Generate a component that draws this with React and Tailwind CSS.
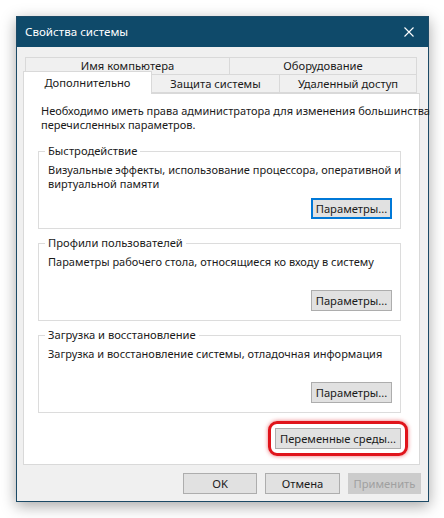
import React from 'react';

const font = { fontFamily: '"Noto Sans", "Segoe UI", sans-serif' };

function Button({ children, focused, disabled, className = '' }) {
  let look = 'border border-[#adadad] bg-[#e1e1e1] text-[#1a1a1a]';
  if (focused) look = 'border-2 border-[#0078d7] bg-[#e1e1e1] text-[#1a1a1a]';
  if (disabled) look = 'border border-[#cccccc] bg-[#cccccc] text-[#a0a0a0]';
  return (
    <div
      className={`flex h-[21px] items-center justify-center whitespace-nowrap text-[11.2px] leading-none ${look} ${className}`}
    >
      {children}
    </div>
  );
}

function GroupBox({ title, children, focused }) {
  return (
    <div className="relative ml-[14px] h-[78px] w-[363px] border border-[#dcdcdc]">
      <span className="absolute -top-[9px] left-[6px] whitespace-nowrap bg-white px-[3px] text-[11.2px] leading-[16px] text-[#1a1a1a]">
        {title}
      </span>
      <div className="flex h-full flex-col pl-[9px] pr-[8px] pt-[11px] pb-[9px]">
        <p className="whitespace-nowrap text-[11px] leading-[14px] text-[#1a1a1a]">{children}</p>
        <div className="mt-auto flex justify-end">
          <Button focused={focused} className="w-[81px]">Параметры...</Button>
        </div>
      </div>
    </div>
  );
}

function Tab({ children, className = '' }) {
  return (
    <div
      className={`flex items-center justify-center whitespace-nowrap border border-[#d9d9d9] text-[11.2px] leading-none text-[#1a1a1a] ${className}`}
    >
      {children}
    </div>
  );
}

export default function App() {
  return (
    <div className="min-h-[518px] bg-white pl-[16px] pt-[16px]" style={font}>
      <div className="flex h-[486px] w-[413px] flex-col border border-[#1c4a66] bg-[#f0f0f0] shadow-[0_4px_14px_rgba(0,0,0,0.35)]">
        {/* Title bar */}
        <div className="flex h-[30px] shrink-0 items-center justify-between bg-[#0f4a6a] pl-[8px] pr-[14px]">
          <span className="text-[11.6px] text-white">Свойства системы</span>
          <svg width="10" height="10" viewBox="0 0 10 10" className="text-white">
            <path d="M0.5 0.5L9.5 9.5M9.5 0.5L0.5 9.5" stroke="currentColor" strokeWidth="1.1" />
          </svg>
        </div>

        {/* Tabs */}
        <div className="mt-[10px] flex shrink-0 flex-col">
          <div className="ml-[8px] flex h-[18px]">
            <Tab className="w-[205px] bg-[#f0f0f0]">Имя компьютера</Tab>
            <Tab className="-ml-px w-[188px] bg-[#f0f0f0]">Оборудование</Tab>
          </div>
          <div className="ml-[6px] -mt-px flex h-[19px]">
            <Tab className="relative z-10 -mt-[3px] h-[23px] w-[129px] border-b-0 bg-white">Дополнительно</Tab>
            <Tab className="-ml-px w-[129px] bg-[#f0f0f0]">Защита системы</Tab>
            <Tab className="-ml-px w-[138px] bg-[#f0f0f0]">Удаленный доступ</Tab>
          </div>
        </div>

        {/* Panel */}
        <div className="ml-[6px] flex h-[372px] w-[397px] shrink-0 flex-col border border-[#d9d9d9] bg-white">
          <p className="mt-[10px] whitespace-nowrap pl-[17px] text-[11px] leading-[14px] text-[#1a1a1a]">
            Необходимо иметь права администратора для изменения большинства
            <br />
            перечисленных параметров.
          </p>
          <div className="mt-[19px] flex flex-col gap-[14px]">
            <GroupBox title="Быстродействие" focused>
              Визуальные эффекты, использование процессора, оперативной и
              <br />
              виртуальной памяти
            </GroupBox>
            <GroupBox title="Профили пользователей">
              Параметры рабочего стола, относящиеся ко входу в систему
            </GroupBox>
            <GroupBox title="Загрузка и восстановление">
              Загрузка и восстановление системы, отладочная информация
            </GroupBox>
          </div>
          <div className="mt-[15px] flex justify-end pr-[18px]">
            <div className="-m-[7px] rounded-[9px] border-[3px] border-[#e0141b] p-[4px] shadow-[0_0_4px_rgba(224,20,27,0.6)]">
              <Button className="w-[126px]">Переменные среды...</Button>
            </div>
          </div>
        </div>

        {/* Bottom buttons */}
        <div className="mt-[8px] flex justify-end gap-[8px] pr-[7px]">
          <Button className="w-[74px]">OK</Button>
          <Button className="w-[75px]">Отмена</Button>
          <Button disabled className="w-[73px]">Применить</Button>
        </div>
      </div>
    </div>
  );
}
